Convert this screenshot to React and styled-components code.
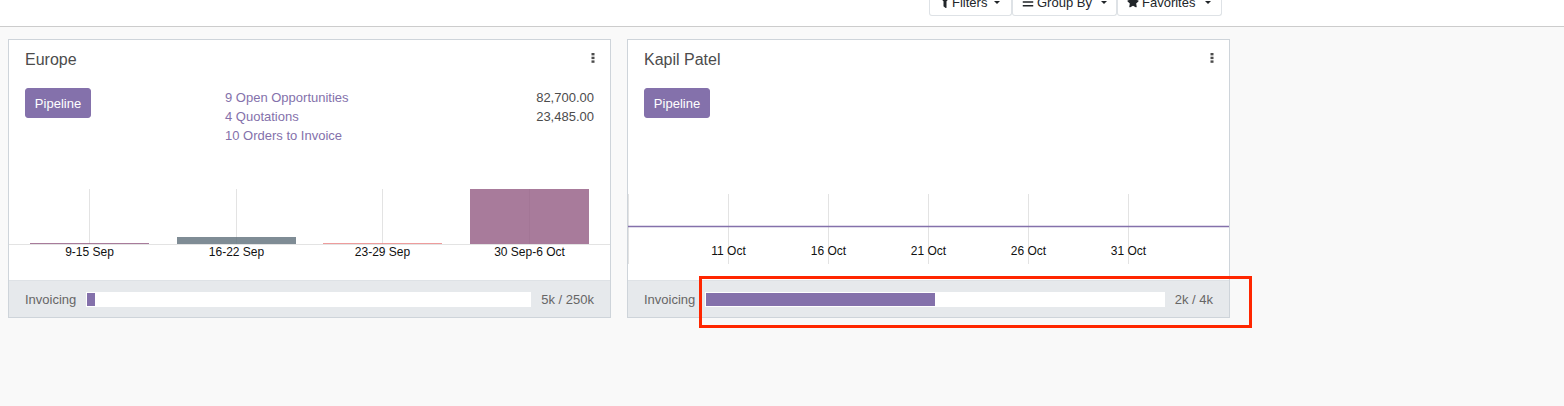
import React from 'react';
import styled, { createGlobalStyle } from 'styled-components';
import { FaFilter, FaBars, FaStar } from 'react-icons/fa';

const Global = createGlobalStyle`
  html, body { margin: 0; padding: 0; background: #f9f9f9; }
  body { font-family: "Liberation Sans", Arial, sans-serif; font-size: 13px; color: #4c4c4c; }
`;
const Page = styled.div`position: relative; height: 406px; overflow: hidden;`;
const TopBar = styled.header`
  background: #fff; border-bottom: 1px solid #ccc;
  display: flex; justify-content: flex-start; align-items: flex-end;
  padding: 0 0 10px 929px; height: 16px;
`;
const FilterBtn = styled.button`
  display: flex; align-items: center; gap: ${p => p.$gap}px; flex: none; box-sizing: border-box;
  width: ${p => p.$w}px; height: 27px; padding: 0 0 0 ${p => p.$pad}px; background: #fff;
  border: 1px solid #dee2e6; border-top: 0; border-radius: 0 0 3px 3px; color: #212529;
  font: 13px "Liberation Sans", Arial, sans-serif;
  svg { flex: none; font-size: 12px; }
`;
const BtnLabel = styled.span`white-space: nowrap;`;
const Caret = styled.span`
  width: 0; height: 0; margin-left: ${p => p.$gap}px;
  border-left: 3px solid transparent; border-right: 3px solid transparent; border-top: 3px solid #212529;
`;
const Cards = styled.main`display: flex; gap: 16px; padding: 12px 8px;`;
const Card = styled.section`
  box-sizing: border-box; width: 603px; height: 279px; background: #fff;
  border: 1px solid #ced4da; display: flex; flex-direction: column;
`;
const CardHead = styled.div`
  height: 48px; box-sizing: border-box; padding: 10px 16px 0; display: flex; justify-content: space-between; align-items: flex-start;
`;
const Title = styled.h3`margin: 0; font-size: 16px; font-weight: 400; line-height: 19px; color: #4c4c4c;`;
const Kebab = styled.svg`width: 4px; height: 10px; margin: 3px -1px 0 0; fill: #4c4c4c;`;
const Body = styled.div`
  height: 101px; box-sizing: border-box; padding: 0 16px;
  display: grid; grid-template-columns: 200px 1fr auto; align-items: start;
`;
const Primary = styled.button`
  width: 66px; height: 30px; padding: 0; border: 1px solid #8471ab; border-radius: 3px;
  background: #8471ab; color: #fff; font: 13px "Liberation Sans", Arial, sans-serif;
`;
const Lines = styled.div`display: flex; flex-direction: column; line-height: 19px;`;
const LinkLine = styled.a`color: #8471ab; text-decoration: none; white-space: nowrap;`;
const Amount = styled.div`text-align: right; color: #4c4c4c;`;
const Chart = styled.svg`display: block; width: 601px; height: 91px; flex: none;`;
const Footer = styled.footer`
  flex: 1; min-height: 0; background: #e6e9ec; border-top: 1px solid #dee2e6;
  display: flex; align-items: center; padding: 0 16px; color: #666;
`;
const BarLabel = styled.span`width: 61px; flex: none; white-space: nowrap;`;
const Track = styled.div`flex: 1; height: 15px; background: #fff; padding: 1px; box-sizing: border-box; margin-right: 10px;`;
const Fill = styled.div`height: 100%; background: #8471ab;`;
const BarValue = styled.span`flex: none; white-space: nowrap;`;
const Mark = styled.div`
  position: absolute; left: 699px; top: 276px; width: 553px; height: 52px; box-sizing: border-box;
  border: 3px solid #ff2600; pointer-events: none;
`;
const AxisText = styled.text`font: 12px "Liberation Sans", Arial, sans-serif; fill: #111; text-anchor: middle;`;

const dots = (
  <Kebab viewBox="0 0 4 10" aria-hidden="true">
    <rect x="0.5" y="0" width="3" height="2.4" /><rect x="0.5" y="3.7" width="3" height="2.4" /><rect x="0.5" y="7.4" width="3" height="2.4" />
  </Kebab>
);

const weeks = [
  { label: '9-15 Sep', cx: 80.5, x: 21, h: 1, fill: '#925a82' },
  { label: '16-22 Sep', cx: 227.5, x: 168, h: 7, fill: '#5f6f7a' },
  { label: '23-29 Sep', cx: 373.5, x: 314, h: 1, fill: '#ea8383' },
  { label: '30 Sep-6 Oct', cx: 520.5, x: 461, h: 55, fill: '#925a82' },
];

function BarChart() {
  return (
    <Chart viewBox="0 0 601 91">
      {weeks.map(w => <line key={w.label} x1={w.cx} x2={w.cx} y1="0" y2="55" stroke="#e3e3e3" />)}
      {weeks.map(w => <rect key={w.label} x={w.x} y={55 - w.h} width="119" height={w.h} fill={w.fill} fillOpacity="0.8" />)}
      <line x1="0" x2="601" y1="55.5" y2="55.5" stroke="#e3e3e3" />
      {weeks.map(w => <AxisText key={w.label} x={w.cx} y="67">{w.label}</AxisText>)}
    </Chart>
  );
}

const days = ['11 Oct', '16 Oct', '21 Oct', '26 Oct', '31 Oct'];
function LineChart() {
  return (
    <Chart viewBox="0 0 601 91">
      <line x1="0.5" x2="0.5" y1="5" y2="75" stroke="#e3e3e3" />
      {days.map((d, i) => <line key={d} x1={100.5 + i * 100} x2={100.5 + i * 100} y1="5" y2="75" stroke="#e3e3e3" />)}
      <line x1="0" x2="601" y1="37.5" y2="37.5" stroke="#8471ab" strokeWidth="1.5" />
      {days.map((d, i) => <AxisText key={d} x={100.5 + i * 100} y="66">{d}</AxisText>)}
    </Chart>
  );
}

export default function App() {
  return (
    <Page>
      <Global />
      <TopBar>
        <FilterBtn $w={83} $pad={9} $gap={1}><FaFilter /><BtnLabel>Filters</BtnLabel><Caret $gap={6} /></FilterBtn>
        <FilterBtn $w={105} $pad={9} $gap={3}><FaBars /><BtnLabel>Group By</BtnLabel><Caret $gap={6} /></FilterBtn>
        <FilterBtn $w={105} $pad={9} $gap={3}><FaStar /><BtnLabel>Favorites</BtnLabel><Caret $gap={7} /></FilterBtn>
      </TopBar>
      <Cards>
        <Card>
          <CardHead><Title>Europe</Title>{dots}</CardHead>
          <Body>
            <Primary>Pipeline</Primary>
            <Lines>
              <LinkLine>9 Open Opportunities</LinkLine>
              <LinkLine>4 Quotations</LinkLine>
              <LinkLine>10 Orders to Invoice</LinkLine>
            </Lines>
            <Lines>
              <Amount>82,700.00</Amount>
              <Amount>23,485.00</Amount>
            </Lines>
          </Body>
          <BarChart />
          <Footer>
            <BarLabel>Invoicing</BarLabel>
            <Track><Fill style={{ width: `${(5 / 250) * 100 * 0.9}%` }} /></Track>
            <BarValue>5k / 250k</BarValue>
          </Footer>
        </Card>
        <Card>
          <CardHead><Title>Kapil Patel</Title>{dots}</CardHead>
          <Body><Primary>Pipeline</Primary></Body>
          <LineChart />
          <Footer>
            <BarLabel>Invoicing</BarLabel>
            <Track><Fill style={{ width: '50%' }} /></Track>
            <BarValue>2k / 4k</BarValue>
          </Footer>
        </Card>
      </Cards>
      <Mark />
    </Page>
  );
}
